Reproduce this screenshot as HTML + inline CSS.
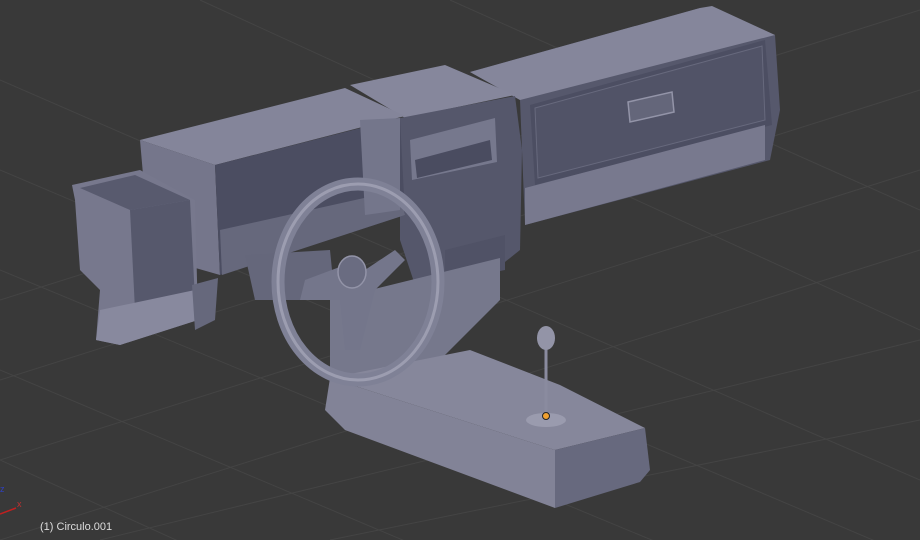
<!DOCTYPE html>
<html><head><meta charset="utf-8"><style>
html,body{margin:0;padding:0;background:#393939;}
svg{display:block}
</style></head><body>
<svg width="920" height="540" viewBox="0 0 920 540" xmlns="http://www.w3.org/2000/svg">
<rect width="920" height="540" fill="#393939"/>
<g stroke="#444" stroke-width="1" fill="none">
<line x1="0" y1="80" x2="920" y2="480"/>
<line x1="0" y1="170" x2="920" y2="560"/>
<line x1="0" y1="270" x2="700" y2="560"/>
<line x1="0" y1="370" x2="450" y2="560"/>
<line x1="0" y1="460" x2="220" y2="560"/>
<line x1="200" y1="0" x2="920" y2="330"/>
<line x1="450" y1="0" x2="920" y2="210"/>
<line x1="0" y1="540" x2="920" y2="250"/>
<line x1="0" y1="460" x2="920" y2="170"/>
<line x1="0" y1="380" x2="920" y2="90"/>
<line x1="0" y1="300" x2="920" y2="10"/>
<line x1="100" y1="540" x2="920" y2="340"/>
<line x1="330" y1="540" x2="920" y2="420"/>
</g>
<!-- right long box -->
<polygon points="470,72 700,8 775,35 780,110 770,160 525,225 520,100" fill="#56586c"/>
<polygon points="470,72 700,8 712,6 775,35 520,100" fill="#85869b"/>
<polygon points="530,105 765,40 772,125 535,185" fill="#4c4e62"/>
<polygon points="535,108 762,46 765,120 538,178" fill="#515367" stroke="#67697d" stroke-width="1"/>
<polygon points="525,188 765,125 765,160 525,225" fill="#78798e"/>
<polygon points="628,102 672,92 674,112 630,122" fill="#64667a" stroke="#9394a8" stroke-width="1.5"/>
<!-- central block -->
<polygon points="350,85 445,65 515,95 405,118" fill="#86879c"/>
<polygon points="400,118 515,96 522,150 520,250 470,290 420,300 400,240" fill="#55576b"/>
<polygon points="410,140 495,118 497,162 412,180" fill="#76788d"/>
<polygon points="415,160 490,140 492,160 417,178" fill="#4a4c60"/>
<polygon points="445,250 505,235 505,270 445,282" fill="#505266"/>
<!-- left box -->
<polygon points="140,140 345,88 405,116 215,165" fill="#84859a"/>
<polygon points="140,140 215,165 220,275 150,255" fill="#75768b"/>
<polygon points="215,165 400,118 405,215 220,275" fill="#4b4d61"/>
<polygon points="220,230 400,190 405,215 222,275" fill="#66687c"/>
<polygon points="360,120 400,118 400,210 365,215" fill="#74768b"/>
<!-- left cluster -->
<polygon points="72,185 140,170 195,200 198,320 120,345 96,340 100,290 80,270 75,200" fill="#77788d"/>
<polygon points="80,188 135,175 190,200 130,210" fill="#585a6e"/>
<polygon points="130,210 190,200 195,300 135,310" fill="#56586c"/>
<polygon points="100,310 195,290 198,320 120,345 96,340" fill="#88899e"/>
<polygon points="192,285 218,278 215,320 195,330" fill="#66687c"/>
<!-- column -->
<polygon points="330,300 500,258 500,300 470,330 440,360 330,380" fill="#76788c"/>
<polygon points="245,255 330,250 335,300 255,300" fill="#65677b"/>
<!-- console -->
<polygon points="330,378 470,350 560,385 645,428 555,450" fill="#86879b"/>
<polygon points="330,378 555,450 555,508 345,430 325,410" fill="#828397"/>
<polygon points="555,450 645,428 650,470 640,482 555,508" fill="#67697e"/>
<ellipse cx="546" cy="420" rx="20" ry="7" fill="#9a9bae"/>
<!-- steering wheel -->
<path d="M305,280 L345,265 L365,270 L395,250 L405,260 L375,290 L360,350 L345,350 L340,300 L300,300 Z" fill="#74768b"/>
<ellipse cx="352" cy="272" rx="14" ry="16" fill="#6a6c81" stroke="#9394a8" stroke-width="1.5"/>
<ellipse cx="358" cy="282" rx="80" ry="98" fill="none" stroke="#7f8196" stroke-width="13"/>
<ellipse cx="358" cy="282" rx="80" ry="98" fill="none" stroke="#9c9db0" stroke-width="3"/>
<!-- shifter -->
<line x1="546" y1="345" x2="546" y2="415" stroke="#8a8b9f" stroke-width="3"/>
<ellipse cx="546" cy="338" rx="9" ry="12" fill="#9394a7"/>
<circle cx="546" cy="416" r="3.5" fill="#f0a030" stroke="#222" stroke-width="1"/>
<!-- axis -->
<line x1="0" y1="514" x2="16" y2="508" stroke="#c02020" stroke-width="1.5"/>
<text x="17" y="507" font-family="Liberation Sans, sans-serif" font-size="9" fill="#c03030">x</text>
<text x="0" y="492" font-family="Liberation Sans, sans-serif" font-size="9" fill="#3040c0">z</text>
<text x="40" y="530" font-family="Liberation Sans, sans-serif" font-size="11" fill="#dcdcdc">(1) Circulo.001</text>
</svg>
</body></html>
